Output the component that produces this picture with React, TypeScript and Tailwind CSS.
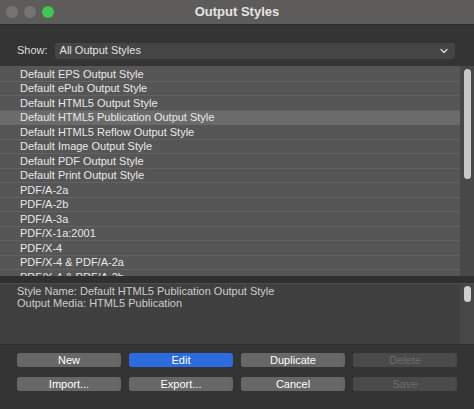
import { ChevronDown } from "lucide-react";

const styles = [
  "Default EPS Output Style",
  "Default ePub Output Style",
  "Default HTML5 Output Style",
  "Default HTML5 Publication Output Style",
  "Default HTML5 Reflow Output Style",
  "Default Image Output Style",
  "Default PDF Output Style",
  "Default Print Output Style",
  "PDF/A-2a",
  "PDF/A-2b",
  "PDF/A-3a",
  "PDF/X-1a:2001",
  "PDF/X-4",
  "PDF/X-4 & PDF/A-2a",
  "PDF/X-4 & PDF/A-2b",
];

const buttons = [
  { label: "New", kind: "normal" },
  { label: "Edit", kind: "primary" },
  { label: "Duplicate", kind: "normal" },
  { label: "Delete", kind: "disabled" },
  { label: "Import...", kind: "normal" },
  { label: "Export...", kind: "normal" },
  { label: "Cancel", kind: "normal" },
  { label: "Save", kind: "disabled" },
];

export default function App() {
  const selected = 3;

  return (
    <div className="w-[474px] h-[409px] bg-[#343434] flex flex-col overflow-hidden font-['Liberation_Sans',Arial,sans-serif] text-[11px] select-none">
      {/* title bar */}
      <div className="h-[25px] shrink-0 bg-[#5d5c5a] border-b border-[#2a2a2a] grid grid-cols-[1fr_auto_1fr] items-center">
        <div className="flex items-center gap-[6px] pl-[6px]">
          <span className="w-[12px] h-[12px] rounded-full bg-[#757472]" />
          <span className="w-[12px] h-[12px] rounded-full bg-[#757472]" />
          <span className="w-[12px] h-[12px] rounded-full bg-[#3ec553]" />
        </div>
        <div className="text-[13px] font-bold text-[#e4e4e4]">Output Styles</div>
        <div />
      </div>

      {/* show row */}
      <div className="h-[41px] shrink-0 flex items-center gap-[7px] pl-[17px] pr-[19px] pt-[10px]">
        <span className="text-[#dcdcdc]">Show:</span>
        <div className="flex-1 h-[16px] bg-[#454545] rounded-[3px] flex items-center justify-between pl-[5px] pr-[5px] text-[#e2e2e2]">
          <span>All Output Styles</span>
          <ChevronDown size={12} strokeWidth={2.5} className="text-[#d8d8d8]" />
        </div>
      </div>

      {/* list */}
      <div className="h-[210px] shrink-0 flex">
        <div className="w-[460px] bg-[#565656] overflow-hidden pt-[1px]">
          {styles.map((s, i) => (
            <div
              key={s}
              className={
                i === selected
                  ? "h-[14.5px] flex items-center pl-[20px] bg-[#6b6b6b] border-b border-[#6b6b6b] text-[#e8e8e8]"
                  : "h-[14.5px] flex items-center pl-[20px] border-b border-[#626262] text-[#e8e8e8]"
              }
            >
              {s}
            </div>
          ))}
        </div>
        <div className="w-[14px] bg-[#484848] flex justify-center pt-[3px]">
          <div className="w-[7px] h-[110px] rounded-full bg-[#c9c9c9]" />
        </div>
      </div>

      <div className="h-[7px] shrink-0 bg-[#303030]" />

      {/* description */}
      <div className="h-[61px] shrink-0 flex border-t border-[#4c4c4c]">
        <div className="w-[460px] bg-[#404040] pl-[17px] pt-[1px] text-[#cdcdcd] leading-[12px]">
          <div>Style Name: Default HTML5 Publication Output Style</div>
          <div>Output Media: HTML5 Publication</div>
        </div>
        <div className="w-[14px] bg-[#474747] flex justify-center pt-[2px]">
          <div className="w-[7px] h-[16px] rounded-full bg-[#d0d0d0]" />
        </div>
      </div>

      {/* buttons */}
      <div className="flex-1 border-t border-[#2c2c2c] grid grid-cols-4 gap-x-[8px] gap-y-[10px] px-[17px] pt-[8px] content-start">
        {buttons.map((b) => (
          <div
            key={b.label}
            className={
              b.kind === "primary"
                ? "h-[14px] rounded-[3px] bg-[#2c6be0] text-white flex items-center justify-center"
                : b.kind === "disabled"
                ? "h-[14px] rounded-[3px] bg-[#4a4a4a] text-[#6c6c6c] flex items-center justify-center"
                : "h-[14px] rounded-[3px] bg-[#676767] text-white flex items-center justify-center"
            }
          >
            {b.label}
          </div>
        ))}
      </div>
    </div>
  );
}
